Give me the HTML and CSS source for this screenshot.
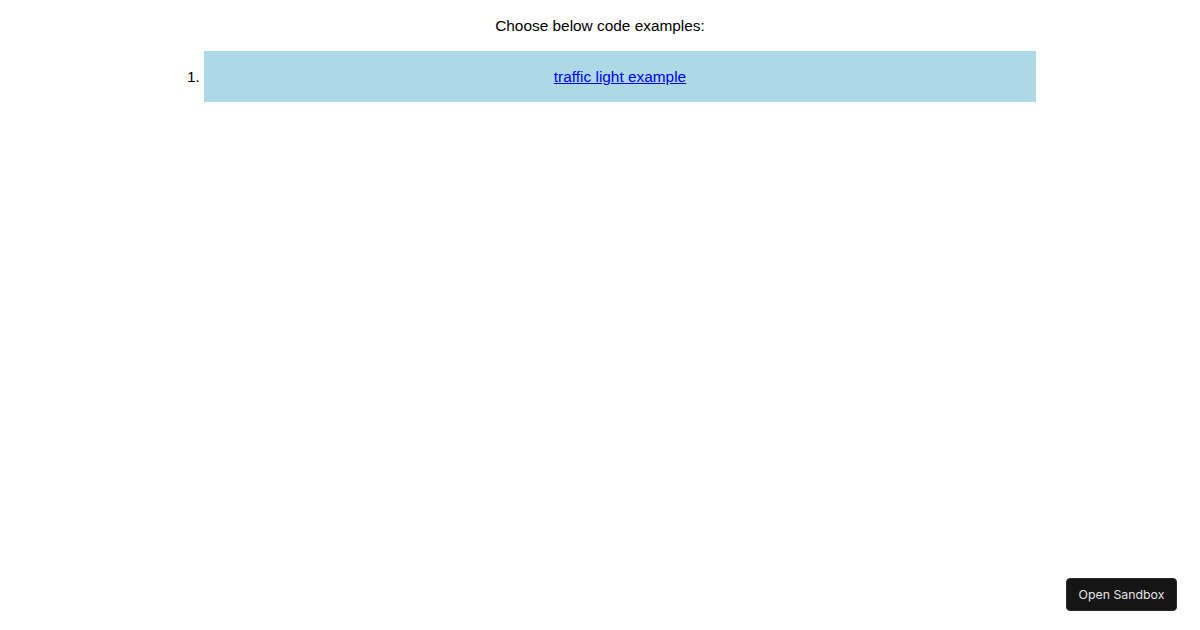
FILE: index.html
```html
<!DOCTYPE html>
<html>
<head>
<meta charset="utf-8">
<link rel="stylesheet" href="styles.css">
</head>
<body>
<div class="page">
  <p class="title">Choose below code examples:</p>
  <ol class="list">
    <li class="item"><a href="#">traffic light example</a></li>
  </ol>
</div>
<button class="sandbox">Open Sandbox</button>
</body>
</html>
```

FILE: styles.css
```css
html, body {
  margin: 0;
  padding: 0;
  background: #fff;
}
body {
  font-family: "Liberation Sans", Arial, sans-serif;
  font-size: 15.4px;
  color: #000;
}
.page {
  width: 872px;
  margin: 0 auto;
  padding-top: 17px;
  text-align: center;
}
.title {
  margin: 0;
  line-height: 18px;
}
.list {
  margin: 16px 0 0;
  padding-left: 40px;
}
.item {
  background: #add8e6;
  height: 51px;
  line-height: 51px;
  text-align: center;
}
.item a {
  color: #0000ee;
  text-decoration: underline;
}
.sandbox {
  position: fixed;
  right: 23px;
  bottom: 19px;
  width: 111px;
  height: 33px;
  background: #151515;
  color: #e6e6e6;
  border: 1px solid #2a2a2a;
  border-radius: 4px;
  font-family: Inter, "Liberation Sans", sans-serif;
  font-size: 12.3px;
  line-height: 31px;
  padding: 0;
  cursor: pointer;
}
```
